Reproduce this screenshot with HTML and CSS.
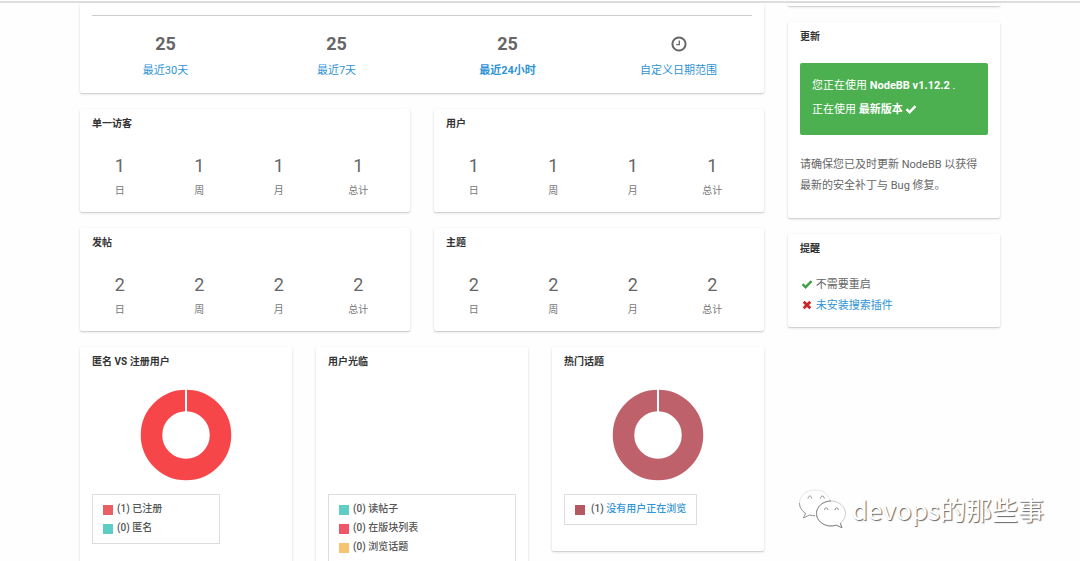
FILE: index.html
```html
<!DOCTYPE html>
<html lang="zh-CN">
<head>
  <meta charset="utf-8">
  <title>NodeBB</title>
  <link rel="stylesheet" href="styles.css">
</head>
<body>

  <div class="topbar"></div>

  <div class="container">
    <main class="main">

      <!-- traffic summary -->
      <div class="card traffic">
        <hr>
        <div class="traffic-row">
          <div><strong>25</strong><a href="#">最近30天</a></div>
          <div><strong>25</strong><a href="#">最近7天</a></div>
          <div><strong>25</strong><a href="#" class="active">最近24小时</a></div>
          <div>
            <svg class="clock" viewBox="0 0 16 16" fill="none" stroke="#666">
              <circle cx="8" cy="8" r="6.6" stroke-width="2"/>
              <path d="M8.3 4.5V8.7H5.3" stroke-width="1.3"/>
            </svg>
            <a href="#">自定义日期范围</a>
          </div>
        </div>
      </div>

      <div class="halves">
        <div class="card">
          <h2>单一访客</h2>
          <div class="stats">
            <div><span>1</span><small>日</small></div>
            <div><span>1</span><small>周</small></div>
            <div><span>1</span><small>月</small></div>
            <div><span>1</span><small>总计</small></div>
          </div>
        </div>
        <div class="card">
          <h2>用户</h2>
          <div class="stats">
            <div><span>1</span><small>日</small></div>
            <div><span>1</span><small>周</small></div>
            <div><span>1</span><small>月</small></div>
            <div><span>1</span><small>总计</small></div>
          </div>
        </div>
        <div class="card">
          <h2>发帖</h2>
          <div class="stats">
            <div><span>2</span><small>日</small></div>
            <div><span>2</span><small>周</small></div>
            <div><span>2</span><small>月</small></div>
            <div><span>2</span><small>总计</small></div>
          </div>
        </div>
        <div class="card">
          <h2>主题</h2>
          <div class="stats">
            <div><span>2</span><small>日</small></div>
            <div><span>2</span><small>周</small></div>
            <div><span>2</span><small>月</small></div>
            <div><span>2</span><small>总计</small></div>
          </div>
        </div>
      </div>

      <!-- charts -->
      <div class="thirds">
        <div class="card chart-card">
          <h2>匿名 VS 注册用户</h2>
          <div class="chart">
            <svg viewBox="0 0 92 92">
              <circle cx="46" cy="46" r="34.5" fill="none" stroke="#f7464a" stroke-width="21.5"/>
              <path d="M46 0V24" stroke="#fff" stroke-width="2"/>
            </svg>
          </div>
          <ul class="legend">
            <li><i class="red"></i>(1) 已注册</li>
            <li><i class="teal"></i>(0) 匿名</li>
          </ul>
        </div>
        <div class="card chart-card">
          <h2>用户光临</h2>
          <div class="chart"></div>
          <ul class="legend legend-full">
            <li><i class="teal"></i>(0) 读帖子</li>
            <li><i class="pink"></i>(0) 在版块列表</li>
            <li><i class="yellow"></i>(0) 浏览话题</li>
          </ul>
        </div>
        <div class="card chart-card topics">
          <h2>热门话题</h2>
          <div class="chart">
            <svg viewBox="0 0 92 92">
              <circle cx="46" cy="46" r="34.5" fill="none" stroke="#bf616a" stroke-width="21.5"/>
              <path d="M46 0V24" stroke="#fff" stroke-width="2"/>
            </svg>
          </div>
          <ul class="legend">
            <li><i class="brown"></i><span>(1) <a href="#">没有用户正在浏览</a></span></li>
          </ul>
        </div>
      </div>
    </main>

    <aside class="side">
      <div class="card side-end"></div>

      <div class="card update">
        <h2>更新</h2>
        <div class="alert">
          <p>您正在使用 <b>NodeBB v1.12.2</b> .</p>
          <p>正在使用 <b>最新版本</b>
            <svg class="icon" viewBox="0 0 12 12"><path d="M1.5 6.2L4.6 9.2L10.5 3.2" fill="none" stroke="#fff" stroke-width="2.4"/></svg>
          </p>
        </div>
        <p class="note">请确保您已及时更新 NodeBB 以获得最新的安全补丁与 Bug 修复。</p>
      </div>

      <div class="card notices">
        <h2>提醒</h2>
        <ul>
          <li>
            <svg class="icon" viewBox="0 0 12 12"><path d="M1.5 6.2L4.6 9.2L10.5 3.2" fill="none" stroke="#43a047" stroke-width="2.4"/></svg>
            不需要重启
          </li>
          <li>
            <svg class="icon" viewBox="0 0 12 12"><path d="M2.7 2.7L9.3 9.3M9.3 2.7L2.7 9.3" fill="none" stroke="#c9252d" stroke-width="2.8"/></svg>
            <a href="#">未安装搜索插件</a>
          </li>
        </ul>
      </div>
    </aside>
  </div>

  <div class="watermark">
    <svg viewBox="0 0 50 44">
      <path d="M17 3C8 3 1.500 8.700 1.500 16c0 4.200 2.200 7.800 6 10.200L5.500 31l6-3c1.800.5 3.600.8 5.500.8 9 0 15.500-5.700 15.500-12.800S26 3 17 3z" fill="#fff" stroke="#e6e6e6"/>
      <path d="M1.500 16c0 4.200 2.200 7.800 6 10.200L5.500 31l6-3c1.800.5 3.600.8 5.500.8" fill="none" stroke="#999"/>
      <path d="M33 14c-8 0-14.500 5.500-14.500 12.500S25 39 33 39c1.900 0 3.700-.3 5.300-.9l5.700 2.700-1.700-4.700c3.200-2.300 5.200-5.700 5.200-9.600C47.500 19.500 41 14 33 14z" fill="#fff" stroke="#ccc"/>
      <path d="M33 14c-8 0-14.500 5.500-14.500 12.500S25 39 33 39c1.900 0 3.700-.3 5.300-.9l5.700 2.700-1.700-4.700" fill="none" stroke="#888"/>
      <path d="M10 11.500c.5-3.300 3.300-3.300 3.800 0M22.500 11.500c.5-3.300 3.300-3.300 3.800 0M26.500 23c.4-3 3-3 3.400 0M37 23c.4-3 3-3 3.400 0" fill="none" stroke="#888"/>
    </svg>
    <span>devops的那些事</span>
  </div>

</body>
</html>
```
FILE: styles.css
```css
body {
  font-family: Roboto, "Noto Sans CJK SC", sans-serif;
  font-size: 11px;
  line-height: 21px;
  color: #666;
  background: #fefefe;
  margin: 0;
  height: 100vh;
  overflow: hidden;
  position: relative;
}
a {
  color: #2f93d6;
  text-decoration: none;
}
ul {
  list-style: none;
  margin: 0;
  padding: 0;
}
p {
  margin: 0;
}

.topbar {
  height: 1px;
  border-bottom: 2px solid #dedede;
}

.container {
  max-width: 920px;
  margin: 0 auto;
  display: grid;
  grid-template-columns: repeat(4, 1fr);
  gap: 24px;
  align-items: start;
}
.main {
  grid-column: span 3;
}

.card {
  background: #fff;
  border-radius: 2px;
  box-shadow: 0 1px 3px rgba(0, 0, 0, 0.14), 0 1px 1px rgba(0, 0, 0, 0.1);
}
.card h2 {
  margin: 0;
  padding: 5px 12px 4px;
  font-size: 10px;
  line-height: 20px;
  font-weight: bold;
  color: #333;
}

.traffic {
  padding: 12px 0;
  margin-bottom: 16px;
}
.traffic hr {
  border: 0;
  border-top: 1px solid #ccc;
  margin: 0 12px 16px;
}
.traffic-row {
  display: grid;
  grid-template-columns: repeat(4, 1fr);
  text-align: center;
}
.traffic-row strong {
  display: block;
  font-size: 18px;
  line-height: 24px;
  margin-bottom: 4px;
}
.traffic-row a {
  display: block;
}
.traffic-row .active {
  font-weight: bold;
}
.clock {
  display: block;
  width: 16px;
  height: 16px;
  margin: 4px auto 8px;
}

.halves {
  display: grid;
  grid-template-columns: 1fr 1fr;
  gap: 16px 24px;
  margin-bottom: 16px;
}
.stats {
  display: grid;
  grid-template-columns: repeat(4, 1fr);
  padding: 16px 12px 9px 0;
  text-align: center;
}
.stats span {
  display: block;
  font-size: 18px;
  line-height: 24px;
}
.stats small {
  display: block;
  margin-top: 1px;
  font-size: 10px;
  line-height: 24px;
  color: #777;
}

.thirds {
  display: grid;
  grid-template-columns: repeat(3, 1fr);
  gap: 24px;
  align-items: start;
}
.chart-card {
  padding-bottom: 48px;
}
.topics {
  padding-bottom: 26px;
}
.chart {
  height: 92px;
  margin: 13px 0;
  text-align: center;
}
.chart svg {
  width: 92px;
  height: 92px;
}
.legend {
  box-sizing: border-box;
  width: fit-content;
  min-width: 128px;
  margin: 0 12px;
  padding: 4px 10px 6px;
  border: 1px solid #ddd;
  font-size: 10px;
  font-weight: 500;
  line-height: 19px;
  color: #555;
}
.legend-full {
  width: auto;
  min-height: 96px;
}
.legend li {
  display: flex;
  align-items: center;
  gap: 4px;
}
.topics li {
  gap: 6px;
}
.legend i {
  width: 10px;
  height: 10px;
  margin-top: 2px;
}
.red { background: #e85f64; }
.teal { background: #5fcdc3; }
.pink { background: #ee5566; }
.yellow { background: #f6c370; }
.brown { background: #b55861; }

.side {
  display: grid;
  gap: 16px;
}
.side-end {
  height: 3px;
}
.update {
  padding-bottom: 22px;
}
.alert {
  margin: 12px 12px 19px;
  padding: 11px 12px 13px;
  background: #4caf50;
  border-radius: 2px;
  color: #fff;
  line-height: 24px;
}
.note {
  padding: 0 12px;
}
.icon {
  width: 12px;
  height: 12px;
  vertical-align: -2px;
}
.notices ul {
  padding: 11px 13px;
}

.watermark {
  position: absolute;
  right: 36px;
  bottom: 30px;
  display: flex;
  align-items: center;
  gap: 4px;
  font-family: "Noto Sans CJK SC", sans-serif;
  font-size: 26px;
  line-height: 44px;
  color: #fff;
  text-shadow: 1px 1px 1px #666;
}
.watermark svg {
  width: 50px;
  height: 44px;
}
```
